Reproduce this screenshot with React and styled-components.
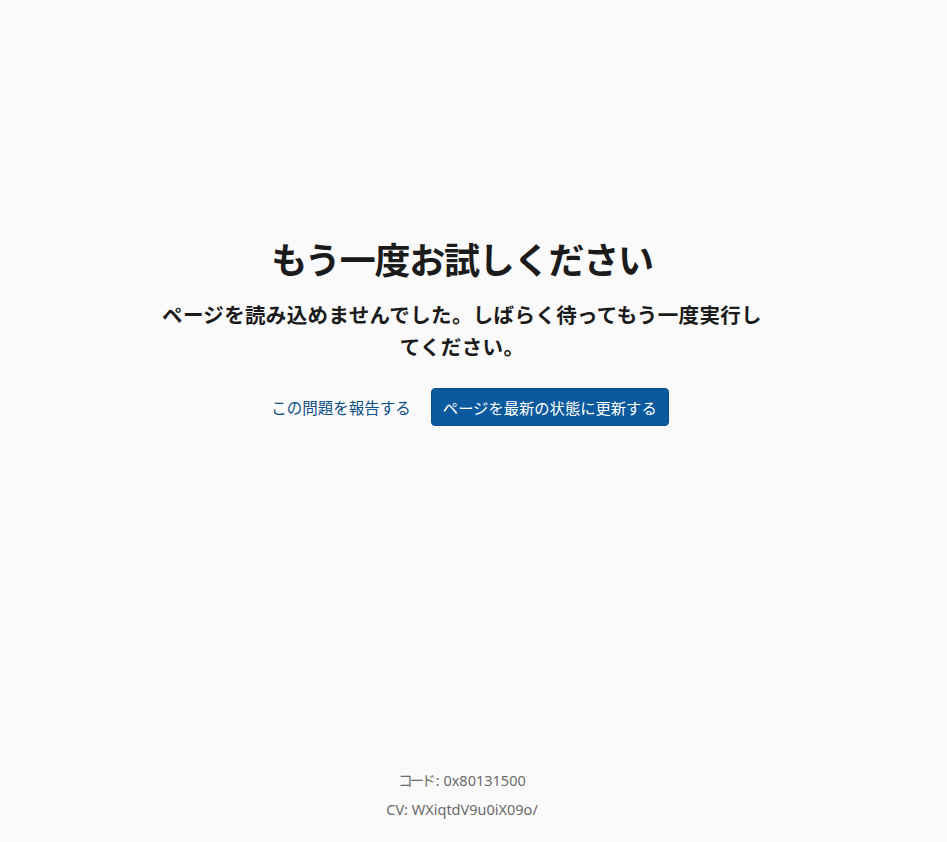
import React from "react";
import styled, { createGlobalStyle } from "styled-components";

const Global = createGlobalStyle`
  html, body { margin: 0; padding: 0; background: #fafafa; }
  body { font-family: "Noto Sans", "Noto Sans CJK JP", sans-serif; color: #1b1b1b; }
  #root { min-height: 100vh; }
`;

const Page = styled.div`
  width: 924px;
  height: 842px;
  display: flex;
  flex-direction: column;
  align-items: center;
`;

const Main = styled.main`
  flex: 1;
  display: flex;
  flex-direction: column;
  align-items: center;
  padding-top: 232px;
`;

const Title = styled.h1`
  margin: 0;
  font-family: "Noto Sans CJK JP", sans-serif;
  font-size: 36px;
  font-weight: 700;
  letter-spacing: -1.2px;
  line-height: 52px;
  color: #1b1b1b;
`;

const Message = styled.p`
  margin: 14px 0 0;
  max-width: 605px;
  text-align: center;
  font-family: "Noto Sans CJK JP", sans-serif;
  font-size: 20.5px;
  font-weight: 700;
  letter-spacing: 0.35px;
  line-height: 32px;
  color: #1b1b1b;
`;

const Actions = styled.div`
  display: flex;
  align-items: center;
  gap: 20px;
  margin-top: 26px;
  margin-left: 16px;
`;

const LinkButton = styled.a`
  font-family: "Noto Sans CJK JP", sans-serif;
  font-size: 15.5px;
  color: #0e4f87;
  text-decoration: none;
  cursor: pointer;
`;

const PrimaryButton = styled.button`
  height: 38px;
  padding: 0 11px;
  border: 1px solid #0a4f8c;
  border-radius: 4px;
  background: #0b5a9e;
  color: #ffffff;
  font-family: "Noto Sans CJK JP", sans-serif;
  font-size: 15.3px;
  cursor: pointer;
`;

const Footer = styled.footer`
  display: flex;
  flex-direction: column;
  align-items: center;
  gap: 8px;
  padding-bottom: 22px;
  font-family: "Noto Sans", "Noto Sans CJK JP", sans-serif;
  font-size: 14.5px;
  line-height: 21px;
  color: #6b6b6b;
`;

const Kana = styled.span`
  letter-spacing: -3px;
  margin-right: 3px;
`;

export default function App() {
  return (
    <>
      <Global />
      <Page>
        <Main>
          <Title>もう一度お試しください</Title>
          <Message>
            ページを読み込めませんでした。しばらく待ってもう一度実行してください。
          </Message>
          <Actions>
            <LinkButton>この問題を報告する</LinkButton>
            <PrimaryButton>ページを最新の状態に更新する</PrimaryButton>
          </Actions>
        </Main>
        <Footer>
          <span>
            <Kana>コード</Kana>: 0x80131500
          </span>
          <span>CV: WXiqtdV9u0iX09o/</span>
        </Footer>
      </Page>
    </>
  );
}
